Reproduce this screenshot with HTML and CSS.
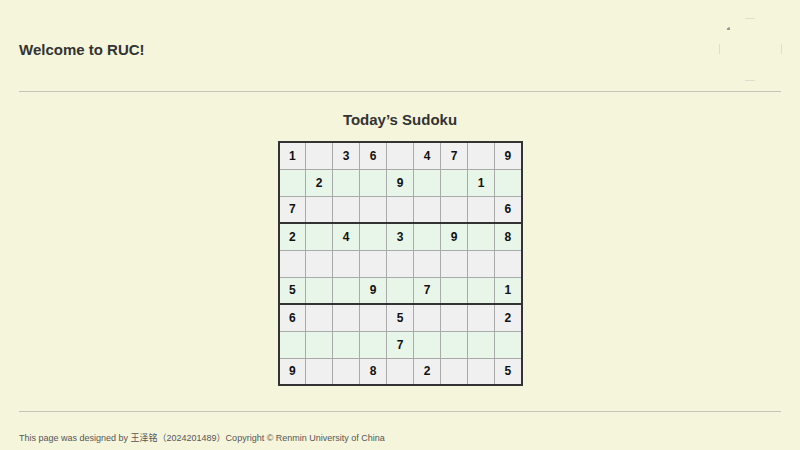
FILE: index.html
```html
<!DOCTYPE html>
<html lang="zh">
<head>
<meta charset="utf-8">
<title>Sudoku</title>
<link rel="stylesheet" href="styles.css">
</head>
<body>
<div class="page">
  <header class="top">
    <h1 class="welcome">Welcome to RUC!</h1>
    <div class="logo">
      <svg width="63" height="63" viewBox="0 0 63 63">
        <g stroke="#deded0" stroke-width="1" fill="none">
          <line x1="26" y1="0.5" x2="36" y2="0.5"/>
          <line x1="26" y1="62.5" x2="36" y2="62.5"/>
          <line x1="0.5" y1="26" x2="0.5" y2="36"/>
          <line x1="62.5" y1="26" x2="62.5" y2="36"/>
        </g>
        <rect x="8" y="10" width="3" height="2" fill="#999"/>
        <rect x="9" y="9" width="2" height="1" fill="#bbb"/>
      </svg>
    </div>
  </header>
  <hr class="rule">
  <main class="main">
    <h2 class="title">Today’s Sudoku</h2>
    <table class="sudoku">
      <tr><td>1</td><td></td><td>3</td><td>6</td><td></td><td>4</td><td>7</td><td></td><td>9</td></tr>
      <tr><td></td><td>2</td><td></td><td></td><td>9</td><td></td><td></td><td>1</td><td></td></tr>
      <tr><td>7</td><td></td><td></td><td></td><td></td><td></td><td></td><td></td><td>6</td></tr>
      <tr><td>2</td><td></td><td>4</td><td></td><td>3</td><td></td><td>9</td><td></td><td>8</td></tr>
      <tr><td></td><td></td><td></td><td></td><td></td><td></td><td></td><td></td><td></td></tr>
      <tr><td>5</td><td></td><td></td><td>9</td><td></td><td>7</td><td></td><td></td><td>1</td></tr>
      <tr><td>6</td><td></td><td></td><td></td><td>5</td><td></td><td></td><td></td><td>2</td></tr>
      <tr><td></td><td></td><td></td><td></td><td>7</td><td></td><td></td><td></td><td></td></tr>
      <tr><td>9</td><td></td><td></td><td>8</td><td></td><td>2</td><td></td><td></td><td>5</td></tr>
    </table>
  </main>
  <hr class="rule rule-foot">
  <footer class="foot">This page was designed by 王泽铭（2024201489）Copyright © Renmin University of China</footer>
</div>
</body>
</html>
```

FILE: styles.css
```css
html, body {
  margin: 0;
  padding: 0;
  background: #f5f5dc;
}
body {
  font-family: "Liberation Sans", Arial, "Noto Sans CJK SC", sans-serif;
  color: #333;
}
.page {
  padding: 18px 19px 0;
}
.top {
  display: flex;
  justify-content: space-between;
  align-items: center;
  height: 63px;
}
.welcome {
  margin: 0;
  font-size: 15px;
  font-weight: bold;
  color: #333;
}
.logo {
  width: 63px;
  height: 63px;
  margin-right: -1px;
}
.logo svg {
  display: block;
}
.rule {
  border: 0;
  border-top: 1px solid #c4c4b8;
  margin: 10px 0 0;
  height: 0;
}
.main {
  display: flex;
  flex-direction: column;
  align-items: center;
}
.title {
  margin: 19px 0 12px;
  font-size: 15px;
  line-height: 18px;
  font-weight: bold;
  color: #333;
}
.sudoku {
  border-collapse: collapse;
  border: 2px solid #333;
}
.sudoku td {
  width: 27px;
  height: 27px;
  padding: 0;
  border: 1px solid #aaa;
  text-align: center;
  font-weight: bold;
  font-size: 12px;
  color: #111;
  box-sizing: border-box;
}
.sudoku tr:nth-child(odd) td {
  background: #f0f0f0;
}
.sudoku tr:nth-child(even) td {
  background: #e8f5e9;
}
.sudoku tr:nth-child(3) td,
.sudoku tr:nth-child(6) td {
  border-bottom: 2px solid #333;
}
.rule-foot {
  margin-top: 25px;
}
.foot {
  padding-top: 20px;
  font-size: 9px;
  line-height: 12px;
  color: #555;
}
```
